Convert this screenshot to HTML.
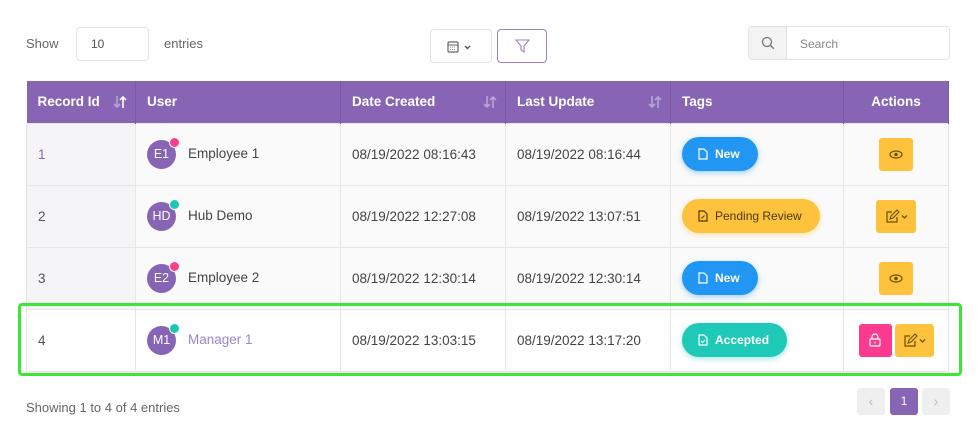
<!DOCTYPE html>
<html><head><style>
*{box-sizing:border-box;margin:0;padding:0}
body{width:980px;height:437px;background:#fff;font-family:"Liberation Sans",sans-serif;color:#555;position:relative;overflow:hidden}
.abs{position:absolute}
.t{font-size:13px;color:#666}
table{position:absolute;left:26px;top:81px;border-collapse:collapse;width:923px}
th{background:#8765b4;color:#fff;font-size:13.5px;font-weight:bold;text-align:left;height:42px;padding:0 11px;border-right:1px solid #7a58a6;position:relative}
th svg.s{position:absolute;right:8px;top:14px}
td{height:62px;border:1px solid #e6e6e6;padding:0 11px;font-size:13.5px;color:#444;background:#fafafa}
tr.w td{background:#fff}
td.c1{background:#f5f5f7;color:#555}
.av{display:inline-block;width:29px;height:29px;border-radius:50%;background:#8765b4;color:#fff;font-size:12.5px;line-height:29px;text-align:center;vertical-align:middle;position:relative;margin-right:12px}
.dot{position:absolute;right:-4px;top:-3px;width:11px;height:11px;border-radius:50%;border:1.5px solid #fff}
.tag{display:inline-block;height:34px;border-radius:17px;color:#fff;font-size:12px;font-weight:bold;line-height:34px;padding:0 18px 0 16px}
.tag svg{vertical-align:-2px;margin-right:7px}
.btn{display:inline-block;height:33px;border-radius:3px;background:#ffc23d;vertical-align:middle;text-align:center}
</style></head><body>
<div class="abs t" style="left:26px;top:36px">Show</div>
<div class="abs" style="left:76px;top:27px;width:73px;height:34px;border:1px solid #e3e3e3;border-radius:4px;font-size:12px;color:#555;padding:9px 0 0 14px">10</div>
<div class="abs t" style="left:164px;top:36px">entries</div>
<div class="abs" style="left:430px;top:29px;width:62px;height:34px;border:1px solid #e3e3e3;border-radius:4px">
<svg class="abs" style="left:16px;top:10px" width="26" height="14" viewBox="0 0 26 14"><rect x="1" y="2" width="10" height="10" rx="1" fill="none" stroke="#666" stroke-width="1.2"/><line x1="1" y1="5" x2="11" y2="5" stroke="#666"/><path d="M3 7h6M3 9.5h6" stroke="#888" stroke-dasharray="1 1"/><path d="M18 6l2.5 2.5L23 6" fill="none" stroke="#555" stroke-width="1.4"/></svg></div>
<div class="abs" style="left:497px;top:29px;width:50px;height:34px;border:1.5px solid #9b82c4;border-radius:4px">
<svg class="abs" style="left:17px;top:9px" width="15" height="14" viewBox="0 0 15 14"><path d="M1 1h13L9 7v6l-3-2V7z" fill="none" stroke="#9b82c4" stroke-width="1.1"/></svg></div>
<div class="abs" style="left:748px;top:26px;width:202px;height:34px;border:1px solid #e3e3e3;border-radius:4px;overflow:hidden">
<div class="abs" style="left:0;top:0;width:38px;height:34px;background:#f3f3f3;border-right:1px solid #e3e3e3"></div>
<svg class="abs" style="left:12px;top:9px" width="14" height="14" viewBox="0 0 14 14"><circle cx="6" cy="6" r="4.5" fill="none" stroke="#777" stroke-width="1.3"/><path d="M9.3 9.3l3.5 3.5" stroke="#777" stroke-width="1.4"/></svg>
<div class="abs" style="left:51px;top:10px;font-size:12px;color:#888">Search</div></div>

<table>
<tr><th style="width:109px">Record Id<svg class="s" width="14" height="14" viewBox="0 0 14 14"><path d="M4 1v11M1 9l3 3 3-3" fill="none" stroke="#b8a3d6" stroke-width="1.6"/><path d="M10 13V2M7 5l3-3 3 3" fill="none" stroke="#fff" stroke-width="1.6"/></svg></th><th style="width:205px">User</th><th style="width:165px">Date Created<svg class="s" width="14" height="14" viewBox="0 0 14 14"><path d="M4 1v11M1 9l3 3 3-3M10 13V2M7 5l3-3 3 3" fill="none" stroke="#b8a3d6" stroke-width="1.6"/></svg></th><th style="width:165px">Last Update<svg class="s" width="14" height="14" viewBox="0 0 14 14"><path d="M4 1v11M1 9l3 3 3-3M10 13V2M7 5l3-3 3 3" fill="none" stroke="#b8a3d6" stroke-width="1.6"/></svg></th><th style="width:173px">Tags</th><th style="text-align:center">Actions</th></tr>
<tr><td class="c1" style="color:#8765b4">1</td><td><span class="av">E1<span class="dot" style="background:#fa3e8e"></span></span>Employee 1</td><td>08/19/2022 08:16:43</td><td>08/19/2022 08:16:44</td><td><span class="tag" style="background:#2196f3;box-shadow:0 2px 6px rgba(33,150,243,.4)"><svg width="10" height="12" viewBox="0 0 10 12"><path d="M1 1h5l3 3v7H1z" fill="none" stroke="#fff" stroke-width="1.2"/></svg>New</span></td><td style="text-align:center"><span class="btn" style="width:34px"><svg width="14" height="33" viewBox="0 0 14 33"><ellipse cx="7" cy="16.5" rx="6" ry="3.5" fill="none" stroke="#6b5000" stroke-width="1.2"/><circle cx="7" cy="16.5" r="1.8" fill="#6b5000"/></svg></span></td></tr>
<tr><td class="c1">2</td><td><span class="av">HD<span class="dot" style="background:#1cc8b5"></span></span>Hub Demo</td><td>08/19/2022 12:27:08</td><td>08/19/2022 13:07:51</td><td><span class="tag" style="background:#ffc23d;color:#4a3a10;font-weight:normal;box-shadow:0 2px 6px rgba(255,194,61,.4)"><svg width="10" height="12" viewBox="0 0 10 12"><path d="M1 1h5l3 3v7H1z" fill="none" stroke="#4a3a10" stroke-width="1.2"/><path d="M3.5 8.5l3-3" stroke="#4a3a10"/></svg>Pending Review</span></td><td style="text-align:center"><span class="btn" style="width:40px"><svg width="30" height="33" viewBox="0 0 30 33"><path d="M11 12H6v10h10v-5" fill="none" stroke="#6b5000" stroke-width="1.2"/><path d="M9 19l1-3 6-6 2 2-6 6z" fill="none" stroke="#6b5000" stroke-width="1.1"/><path d="M21 15.5l2.5 2.5 2.5-2.5" fill="none" stroke="#6b5000" stroke-width="1.3"/></svg></span></td></tr>
<tr><td class="c1">3</td><td><span class="av">E2<span class="dot" style="background:#fa3e8e"></span></span>Employee 2</td><td>08/19/2022 12:30:14</td><td>08/19/2022 12:30:14</td><td><span class="tag" style="background:#2196f3;box-shadow:0 2px 6px rgba(33,150,243,.4)"><svg width="10" height="12" viewBox="0 0 10 12"><path d="M1 1h5l3 3v7H1z" fill="none" stroke="#fff" stroke-width="1.2"/></svg>New</span></td><td style="text-align:center"><span class="btn" style="width:34px"><svg width="14" height="33" viewBox="0 0 14 33"><ellipse cx="7" cy="16.5" rx="6" ry="3.5" fill="none" stroke="#6b5000" stroke-width="1.2"/><circle cx="7" cy="16.5" r="1.8" fill="#6b5000"/></svg></span></td></tr>
<tr class="w"><td class="c1">4</td><td><span class="av">M1<span class="dot" style="background:#1cc8b5"></span></span><span style="color:#9c86c6">Manager 1</span></td><td>08/19/2022 13:03:15</td><td>08/19/2022 13:17:20</td><td><span class="tag" style="background:#1ec9b7;box-shadow:0 2px 6px rgba(30,201,183,.4)"><svg width="10" height="12" viewBox="0 0 10 12"><path d="M1 1h5l3 3v7H1z" fill="none" stroke="#fff" stroke-width="1.2"/><path d="M3 7l1.5 1.5L7 6" fill="none" stroke="#fff"/></svg>Accepted</span></td><td style="text-align:center;padding:0"><span class="btn" style="width:33px;background:#fd3b8e;margin-right:3px"><svg width="12" height="33" viewBox="0 0 12 33"><rect x="1" y="15" width="10" height="7" rx="1" fill="none" stroke="#fff" stroke-width="1.2"/><path d="M3 15v-2a3 3 0 0 1 6 0v2" fill="none" stroke="#fff" stroke-width="1.2"/><path d="M6 17.5v2" stroke="#fff"/></svg></span><span class="btn" style="width:39px"><svg width="30" height="33" viewBox="0 0 30 33"><path d="M11 12H6v10h10v-5" fill="none" stroke="#6b5000" stroke-width="1.2"/><path d="M9 19l1-3 6-6 2 2-6 6z" fill="none" stroke="#6b5000" stroke-width="1.1"/><path d="M21 15.5l2.5 2.5 2.5-2.5" fill="none" stroke="#6b5000" stroke-width="1.3"/></svg></span></td></tr>
</table>
<div class="abs" style="left:18px;top:303px;width:944px;height:73px;border:3px solid #3de635;border-radius:4px"></div>
<div class="abs t" style="left:26px;top:400px">Showing 1 to 4 of 4 entries</div>
<div class="abs" style="left:857px;top:388px;width:28px;height:27px;background:#efefef;border-radius:3px;color:#bbb;text-align:center;line-height:27px;font-size:14px">‹</div>
<div class="abs" style="left:890px;top:388px;width:28px;height:27px;background:#8765b4;border-radius:3px;color:#fff;text-align:center;line-height:27px;font-size:12px">1</div>
<div class="abs" style="left:922px;top:388px;width:28px;height:27px;background:#efefef;border-radius:3px;color:#bbb;text-align:center;line-height:27px;font-size:14px">›</div>
</body></html>
